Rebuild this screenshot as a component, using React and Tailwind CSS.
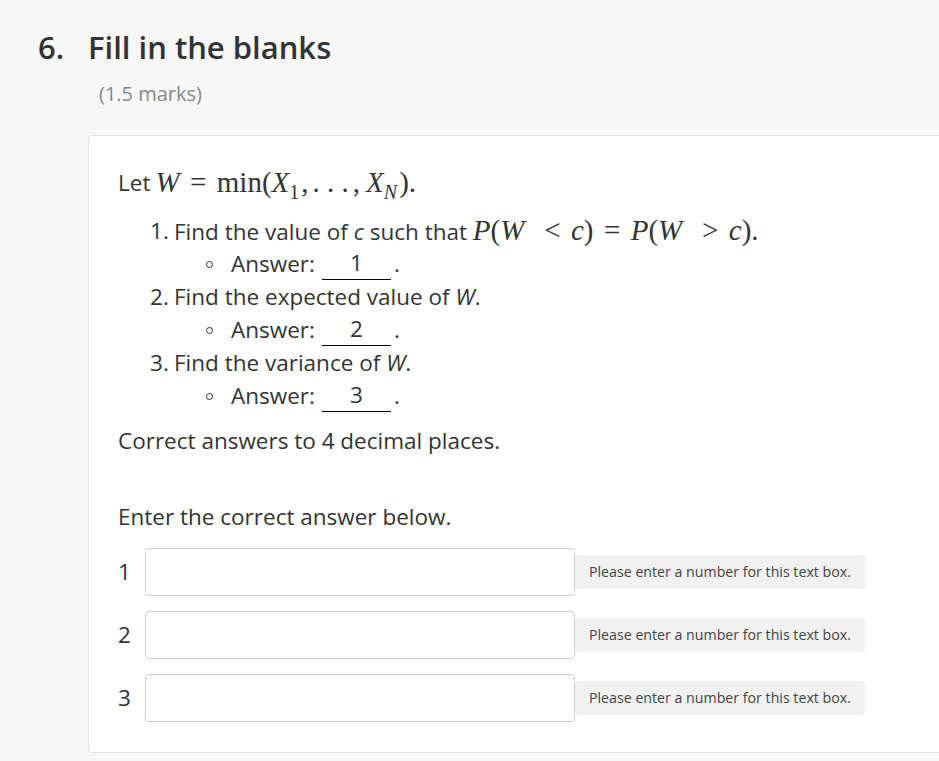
import React from "react"

const serif = "font-['Liberation_Serif','Times_New_Roman',serif]"

const Rel = ({ children }) => <span className="mx-[0.36em] not-italic">{children}</span>

const Blank = ({ value }) => (
  <span className="inline-flex items-center">
    <span className="inline-block w-[69px] ml-[7px] border-b border-black text-center leading-[32px]">{value}</span>
    <span className="ml-[3px]">.</span>
  </span>
)

const AnswerRow = ({ value }) => (
  <div className="flex items-center h-[33px] pl-[88px]">
    <span className="w-[7px] h-[7px] rounded-full border-[1.5px] border-[#333] mt-[2px]" />
    <span className="ml-[18px]">Answer:</span>
    <Blank value={value} />
  </div>
)

const ItemRow = ({ n, children }) => (
  <div className="flex items-center h-[33px] pl-[32px]">
    <span className="w-[24px]">{n}.</span>
    <span className="whitespace-nowrap">{children}</span>
  </div>
)

const InputRow = ({ n }) => (
  <div className="flex items-center">
    <span className="w-[27px] text-[22.5px]">{n}</span>
    <div className="w-[430px] h-[48px] bg-white border border-[#ccc] rounded-[4px]" />
    <div className="w-[290px] h-[34px] bg-[#f1f1f1] rounded-[4px] flex items-center pl-[14px] text-[14.2px] text-[#444]">
      Please enter a number for this text box.
    </div>
  </div>
)

export default function App() {
  return (
    <div className="min-h-screen bg-[#f7f7f7] overflow-hidden font-['Open_Sans',sans-serif] text-[#333]">
      {/* Heading */}
      <div className="flex pt-[29px] pl-[38px] text-[31px] leading-[36px] font-semibold">
        <span className="w-[50px]">6.</span>
        <span>Fill in the blanks</span>
      </div>
      <div className="mt-[15px] pl-[99px] text-[20px] leading-[28px] text-[#888]">(1.5 marks)</div>

      {/* Question card */}
      <div className="mt-[27px] ml-[88px] bg-white border border-r-0 border-[#e3e3e3] rounded-l-[4px] pt-[31px] pl-[29px] pb-[30px] text-[22.5px]">
        <div className="flex items-center h-[32px] whitespace-nowrap">
          <span>Let</span>
          <span className={`${serif} text-[29px] ml-[5px]`}>
            <i>W</i>
            <Rel>=</Rel>
            <span>min(</span>
            <i>X</i>
            <span className="align-sub text-[20px] leading-none">1</span>
            <span className="ml-[2px]">,</span>
            <span className="mx-[4px]">. . .</span>
            <span>,</span>
            <i className="ml-[6px]">X</i>
            <i className="align-sub text-[20px] leading-none">N</i>
            <span className="ml-[2px]">).</span>
          </span>
        </div>

        <div className="mt-[15px]">
          <ItemRow n={1}>
            Find the value of <i>c</i> such that{" "}
            <span className={`${serif} text-[29px]`}>
              <i>P</i>(<i>W</i>
              <span className="ml-[0.32em]" />
              <Rel>&lt;</Rel>
              <i>c</i>)<Rel>=</Rel>
              <i>P</i>(<i>W</i>
              <span className="ml-[0.32em]" />
              <Rel>&gt;</Rel>
              <i>c</i>).
            </span>
          </ItemRow>
          <AnswerRow value="1" />
          <ItemRow n={2}>
            Find the expected value of <i>W</i>.
          </ItemRow>
          <AnswerRow value="2" />
          <ItemRow n={3}>
            Find the variance of <i>W</i>.
          </ItemRow>
          <AnswerRow value="3" />
        </div>

        <p className="mt-[13px] leading-[32px]">Correct answers to 4 decimal places.</p>
        <p className="mt-[44px] leading-[32px]">Enter the correct answer below.</p>

        <div className="mt-[15px] flex flex-col gap-[15px]">
          <InputRow n={1} />
          <InputRow n={2} />
          <InputRow n={3} />
        </div>
      </div>
    </div>
  )
}
